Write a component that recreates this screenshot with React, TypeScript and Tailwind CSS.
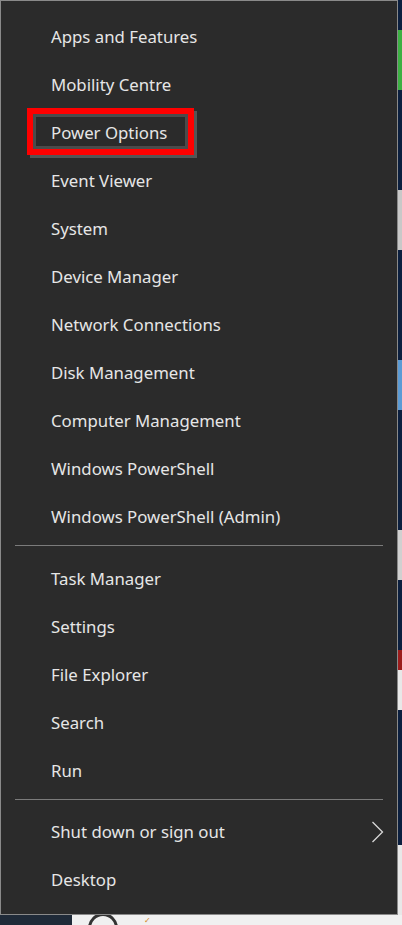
const topItems = [
  'Apps and Features',
  'Mobility Centre',
  'Power Options',
  'Event Viewer',
  'System',
  'Device Manager',
  'Network Connections',
  'Disk Management',
  'Computer Management',
  'Windows PowerShell',
  'Windows PowerShell (Admin)',
];

const midItems = ['Task Manager', 'Settings', 'File Explorer', 'Search', 'Run'];

function Item({ label, chevron }: { label: string; chevron?: boolean }) {
  return (
    <div className="h-12 flex items-center justify-between pl-[50px] pr-[13px] text-[16.8px] text-[#e6e6e6]">
      <span>{label}</span>
      {chevron && (
        <svg width="13" height="22" viewBox="0 0 13 22">
          <polyline points="1.5,1 11.5,11 1.5,21" fill="none" stroke="#d8d8d8" strokeWidth="1.3" />
        </svg>
      )}
    </div>
  );
}

export default function App() {
  return (
    <div
      className="w-[402px] h-[925px] flex flex-col bg-[#0b1f3f] overflow-hidden"
      style={{ fontFamily: '"Noto Sans", "Open Sans", sans-serif' }}
    >
      <div className="flex h-[915px]">
        <div className="relative w-[398px] h-[915px] bg-[#2b2b2b] border border-[#8a8a8a] pt-[12px]">
          {topItems.map((t) => (
            <Item key={t} label={t} />
          ))}
          <div className="mx-[14px] h-px bg-[#7b7b7b] mt-[4px] mb-[9px]" />
          {midItems.map((t) => (
            <Item key={t} label={t} />
          ))}
          <div className="mx-[14px] h-px bg-[#7b7b7b] mt-[4px] mb-[8px]" />
          <Item label="Shut down or sign out" chevron />
          <Item label="Desktop" />

          {/* annotation box */}
          <div className="absolute left-[26px] top-[107px] w-[167px] h-[47px] border-[6px] border-[#ff0000] shadow-[3px_3px_0_#555555]">
            <div className="w-full h-full border-[3px] border-[#4b4b4b]" />
          </div>
        </div>
        {/* desktop strip on the right */}
        <div className="w-[4px] flex flex-col">
          <div className="h-[30px] bg-[#0b1f3f]" />
          <div className="h-[60px] bg-[#3cb043]" />
          <div className="h-[100px] bg-[#0b1f3f]" />
          <div className="h-[60px] bg-[#c8c8c8]" />
          <div className="h-[110px] bg-[#0b1f3f]" />
          <div className="h-[50px] bg-[#5b9bd5]" />
          <div className="h-[120px] bg-[#0b1f3f]" />
          <div className="h-[50px] bg-[#d0d0d0]" />
          <div className="h-[70px] bg-[#0b1f3f]" />
          <div className="h-[20px] bg-[#9b1c1c]" />
          <div className="h-[40px] bg-[#e8e8e8]" />
          <div className="h-[135px] bg-[#0b1f3f]" />
          <div className="flex-1 bg-[#e8e8e8]" />
        </div>
      </div>
      <div className="flex h-[10px]">
        <div className="w-[72px] bg-[#1f2a38]" />
        <div className="flex-1 bg-[#f0f0f0] relative overflow-hidden">
          <div className="absolute left-[16px] -top-[2px] w-[30px] h-[30px] rounded-full border-[3px] border-[#333333]" />
          <div className="absolute left-[72px] top-[1px] w-[12px] h-[8px] text-[8px] leading-none text-[#d08020]">✓</div>
        </div>
      </div>
    </div>
  );
}
